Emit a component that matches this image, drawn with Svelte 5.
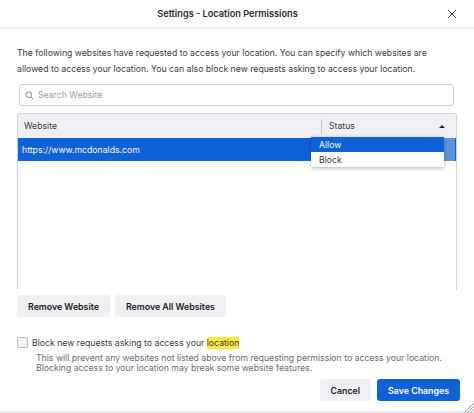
<script>
  const sites = ["https://www.mcdonalds.com"]
</script>

<div class="dialog">
  <header class="title">
    <span>Settings - Location Permissions</span>
    <svg class="close" viewBox="0 0 10 10" width="10" height="10">
      <path d="M1 1 L9 9 M9 1 L1 9" />
    </svg>
  </header>

  <main class="content">
    <p class="intro">The following websites have requested to access your location. You can specify which websites are allowed to access your location. You can also block new requests asking to access your location.</p>

    <div class="search">
      <svg viewBox="0 0 10 10" width="9" height="9">
        <circle cx="4.2" cy="4.2" r="3.2" />
        <path d="M6.6 6.6 L9.4 9.4" />
      </svg>
      <span>Search Website</span>
    </div>

    <div class="table">
      <div class="thead">
        <div class="col-site">Website</div>
        <div class="col-status">
          <span>Status</span>
          <i class="arrow"></i>
        </div>
      </div>
      {#each sites as site}
        <div class="row">{site}<i class="row-end"></i></div>
      {/each}
      <div class="menu">
        <div class="opt active">Allow</div>
        <div class="opt">Block</div>
      </div>
    </div>

    <div class="actions">
      <button class="btn">Remove Website</button>
      <button class="btn">Remove All Websites</button>
    </div>

    <label class="block">
      <span class="box"></span>
      <span>Block new requests asking to access your <mark>location</mark></span>
    </label>
    <p class="help">This will prevent any websites not listed above from requesting permission to access your location. Blocking access to your location may break some website features.</p>

    <footer class="foot">
      <button class="btn">Cancel</button>
      <button class="btn primary">Save Changes</button>
    </footer>
  </main>
  <div class="strip"></div>
  <svg class="grip" viewBox="0 0 10 10" width="10" height="10">
    <path d="M0 10 L10 0 M3 10 L10 3 M6 10 L10 6" />
  </svg>
</div>

<style>
  :global(body) {
    margin: 0;
    background: #fff;
  }
  .dialog {
    position: relative;
    width: 474px;
    height: 413px;
    display: flex;
    flex-direction: column;
    overflow: hidden;
    font-family: Inter, "Liberation Sans", sans-serif;
    font-size: 8.7px;
    color: #3a3a40;
  }
  .title {
    height: 27px;
    flex: none;
    display: flex;
    align-items: center;
    justify-content: center;
    position: relative;
    padding-right: 19px;
    border-bottom: 2px solid #ededf0;
    font-weight: 600;
    font-size: 9.2px;
    color: #2b2a33;
  }
  .close {
    position: absolute;
    right: 17px;
    top: 9px;
  }
  .close path {
    stroke: #444;
    stroke-width: 1;
    fill: none;
  }
  .content {
    flex: 1;
    display: flex;
    flex-direction: column;
    padding: 16px 14px 0 17px;
  }
  .intro {
    margin: 0;
    line-height: 16px;
    width: 430px;
  }
  .search {
    margin: 7px 6px 0 2px;
    height: 20px;
    display: flex;
    align-items: center;
    gap: 4px;
    padding-left: 5px;
    border: 1px solid #cfcfd4;
    border-radius: 3px;
    color: #a0a0a6;
  }
  .search svg {
    fill: none;
    stroke: #77777e;
    stroke-width: 1;
  }
  .table {
    position: relative;
    margin: 7px 3px 0 0;
    height: 177px;
    border: 1px solid #cfcfd8;
    border-bottom: 0;
    border-radius: 3px 3px 0 0;
    box-sizing: border-box;
  }
  .thead {
    height: 24px;
    display: flex;
    align-items: center;
    background: #f0f0f4;
  }
  .col-site {
    width: 303px;
    padding-left: 6px;
    box-sizing: border-box;
  }
  .col-status {
    flex: 1;
    height: 15px;
    display: flex;
    align-items: center;
    justify-content: space-between;
    padding: 0 11px 0 7px;
    border-left: 1px solid #c4c4ca;
  }
  .arrow {
    border-left: 3px solid transparent;
    border-right: 3px solid transparent;
    border-bottom: 3px solid #222;
  }
  .row {
    position: relative;
    height: 23px;
    display: flex;
    align-items: center;
    padding-left: 4px;
    background: #0f62d6;
    color: #f4f7fd;
  }
  .row-end {
    position: absolute;
    right: 1px;
    top: 0;
    bottom: 0;
    width: 11px;
    background: #5f93dc;
  }
  .menu {
    position: absolute;
    left: 293px;
    top: 23px;
    width: 133px;
    background: #fff;
    box-shadow: 0 1px 4px rgba(0, 0, 0, 0.3);
    color: #3a3a40;
  }
  .opt {
    height: 15px;
    display: flex;
    align-items: center;
    padding-left: 8px;
  }
  .opt.active {
    background: #0f62d6;
    color: #f4f7fd;
  }
  .actions {
    margin-top: 5px;
    display: flex;
    gap: 5px;
  }
  .btn {
    height: 22px;
    padding: 0 11px;
    border: 0;
    border-radius: 3px;
    background: #f0f0f4;
    color: #1c1b22;
    font: 600 8.8px Inter, "Liberation Sans", sans-serif;
  }
  .block {
    margin-top: 20px;
    display: flex;
    align-items: center;
    gap: 4px;
    height: 11px;
  }
  .box {
    width: 9px;
    height: 9px;
    border: 1px solid #b5b5bb;
    border-radius: 2px;
    background: #f5f5f7;
  }
  mark {
    background: #ffe93b;
    color: inherit;
    padding: 1px 0;
  }
  .help {
    margin: 5px 0 0 19px;
    line-height: 10px;
    color: #6a6a73;
  }
  .foot {
    margin-top: 6px;
    display: flex;
    justify-content: flex-end;
    gap: 6px;
  }
  .primary {
    background: #0f62d6;
    color: #fff;
  }
  .strip {
    height: 2px;
    flex: none;
    background: #ededf0;
  }
  .grip {
    position: absolute;
    right: 0;
    bottom: 0;
  }
  .grip path {
    stroke: #8a8a90;
    stroke-width: 0.8;
    fill: none;
  }
</style>
